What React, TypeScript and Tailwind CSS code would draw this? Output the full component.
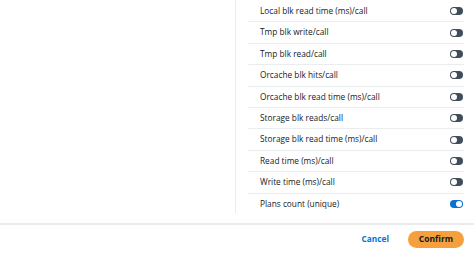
const columns: { label: string; on: boolean }[] = [
  { label: "Local blk read time (ms)/call", on: false },
  { label: "Tmp blk write/call", on: false },
  { label: "Tmp blk read/call", on: false },
  { label: "Orcache blk hits/call", on: false },
  { label: "Orcache blk read time (ms)/call", on: false },
  { label: "Storage blk reads/call", on: false },
  { label: "Storage blk read time (ms)/call", on: false },
  { label: "Read time (ms)/call", on: false },
  { label: "Write time (ms)/call", on: false },
  { label: "Plans count (unique)", on: true },
];

function Toggle({ on }: { on: boolean }) {
  return (
    <span
      className={`flex h-[8px] w-[13px] items-center rounded-full px-[1px] ${
        on ? "justify-end bg-[#0972d3]" : "justify-start bg-[#414d5c]"
      }`}
    >
      <span className="h-[6px] w-[6px] rounded-full bg-white" />
    </span>
  );
}

export default function App() {
  return (
    <div
      className="h-[253px] w-[474px] bg-white text-[#16191f]"
      style={{ fontFamily: '"Open Sans", "Liberation Sans", sans-serif' }}
    >
      <div className="flex h-[223px] pb-[10px]">
        <div className="w-[236px] border-r border-[#e9ebed]" />
        <div className="flex-1 pl-[12px] pr-[10px] pt-[1px]">
          {columns.map((c, i) => (
            <div
              key={c.label}
              className={`flex h-[21.4px] items-center justify-between pl-[12px] pr-[1px] ${
                i < columns.length - 1 ? "border-b border-[#eaeded]" : ""
              }`}
            >
              <span className="text-[8.3px] font-medium">{c.label}</span>
              <Toggle on={c.on} />
            </div>
          ))}
        </div>
      </div>
      <div className="flex h-[30px] items-center justify-end gap-[19px] border-t-2 border-[#e9ebed] pr-[10px]">
        <span className="text-[8.3px] font-bold text-[#0972d3]">Cancel</span>
        <button className="h-[17px] w-[56px] rounded-full bg-[#f5a03c] text-[8.5px] font-bold text-[#16191f]">
          Confirm
        </button>
      </div>
    </div>
  );
}
